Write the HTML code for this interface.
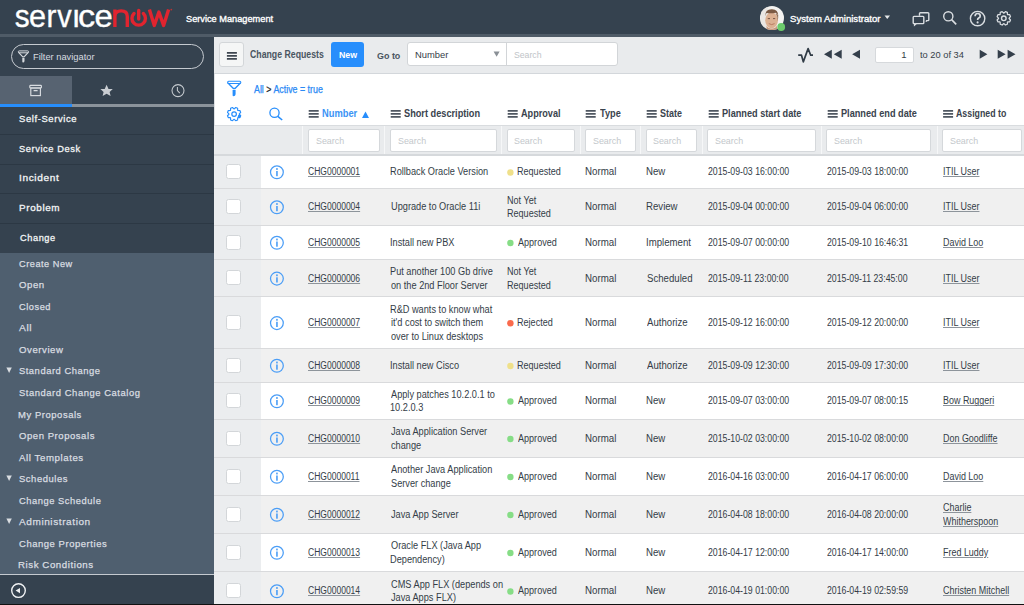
<!DOCTYPE html>
<html><head><meta charset="utf-8"><style>
html,body{margin:0;padding:0;}
body{width:1024px;height:605px;overflow:hidden;position:relative;background:#35424f;font-family:"Liberation Sans", sans-serif;}
.t{position:absolute;white-space:nowrap;}
.r{position:absolute;box-sizing:content-box;}
</style></head><body>
<div class="r" style="left:0px;top:0px;width:1024px;height:34px;background:#35424f;"></div>
<div class="r" style="left:0px;top:34px;width:1024px;height:3px;background:#4f5b67;"></div>
<div class="r" style="left:0px;top:37px;width:214px;height:568px;background:#35424f;"></div>
<svg class="r" style="left:0;top:0" width="180" height="34" viewBox="0 0 180 34"><g font-family="Liberation Sans" font-size="31.8" stroke-width="0.35"><text transform="translate(14.68,26.75) scale(0.936,1)" fill="#fff" stroke="#fff">s</text><text transform="translate(29.10,26.75) scale(0.964,1)" fill="#fff" stroke="#fff">e</text><text transform="translate(46.44,26.75) scale(0.937,1)" fill="#fff" stroke="#fff">r</text><text transform="translate(57.33,26.75) scale(0.908,1)" fill="#fff" stroke="#fff">v</text><text transform="translate(71.77,26.75) scale(0.996,1)" fill="#fff" stroke="#fff">ı</text><text transform="translate(77.93,26.75) scale(1.079,1)" fill="#fff" stroke="#fff">c</text><text transform="translate(94.60,26.75) scale(1.031,1)" fill="#fff" stroke="#fff">e</text></g><g fill="none" stroke="#e1242f" stroke-width="3.4"><path d="M114.9 27 V9.4 M114.9 16.2 Q115.2 10.9 121.1 10.9 Q127.3 10.9 127.3 16.5 V27"/><path d="M134 13.5 A6.75 6.75 0 1 0 143.4 13.5" stroke-linecap="round"/><path d="M138.7 10.4 V19" stroke-linecap="round"/><path d="M149.4 9.6 L154.3 25.4 L158.9 12 L163.6 25.4 L168.6 9.6" stroke-linejoin="round"/></g><circle cx="171.3" cy="9.6" r="0.9" fill="#b33"/></svg>
<div class="t" style="left:186.06px;top:13.03px;font-size:9.8px;line-height:12.74px;font-weight:normal;color:#fff;letter-spacing:0px;transform:scaleX(0.9407);transform-origin:0 0;-webkit-text-stroke:0.35px #fff">Service Management</div>
<svg class="r" style="left:758px;top:4px" width="30" height="30" viewBox="0 0 30 30">
<defs><clipPath id="av"><circle cx="14" cy="14" r="12"/></clipPath></defs>
<circle cx="14" cy="14" r="12" fill="#f4f2f0"/>
<g clip-path="url(#av)">
<path d="M3 8 Q4 2 10 3 L8 26 L2 26Z" fill="#e9e6e3"/>
<ellipse cx="13.6" cy="16.3" rx="6.4" ry="8" fill="#dcb193"/>
<path d="M7.2 12.5 Q7 5 13.8 5.2 Q20.2 5 20.4 12.2 Q19.5 9.2 17.5 8.8 Q13 9.8 8.5 9 Q7.6 10.5 7.2 12.5Z" fill="#7b5a44"/>
<path d="M17.6 9 Q20.6 10 20.2 14 L19.4 17 Q19.8 12 17.6 9Z" fill="#8e6b52"/>
<path d="M9.8 14.6 H12 M15 14.6 H17.2" stroke="#6a4c3c" stroke-width="0.9"/>
<path d="M10.8 19.6 Q13.6 21.6 16.6 19.6" stroke="#b5765e" stroke-width="0.9" fill="none"/>
<path d="M8.5 21.5 Q10 24.6 13.8 24.4 Q17.5 24.6 19 21.5 L19 26 L8.5 26Z" fill="#c9997c"/>
</g>
<circle cx="23.2" cy="23" r="3.9" fill="#6ccb6c"/>
</svg>
<div class="t" style="left:789.82px;top:12.83px;font-size:9.8px;line-height:12.74px;font-weight:normal;color:#fff;letter-spacing:0px;transform:scaleX(0.9778);transform-origin:0 0;-webkit-text-stroke:0.35px #fff">System Administrator</div>
<svg class="r" style="left:884px;top:15px" width="7" height="5"><path d="M0.5 0.5 H6 L3.25 4Z" fill="#e6e8ea"/></svg>
<svg class="r" style="left:905px;top:4px" width="116" height="30" viewBox="905 4 116 30" fill="none" stroke="#dadee2" stroke-width="1.4">
<path d="M919.5 15.7 V13.6 Q919.5 12.8 920.3 12.8 H928 Q928.8 12.8 928.8 13.6 V19.8 Q928.8 20.6 928 20.6 H926.6 L926 21.8"/>
<path d="M914 16.4 H923 Q923.8 16.4 923.8 17.2 V22.8 Q923.8 23.6 923 23.6 H916.2 L914.6 25 V23.6 H914 Q913.2 23.6 913.2 22.8 V17.2 Q913.2 16.4 914 16.4Z"/>
<circle cx="948.3" cy="16.3" r="4.6"/>
<path d="M951.6 19.6 L956.2 24.4" stroke-width="1.6"/>
<circle cx="977.6" cy="18.6" r="7.2"/>
<circle cx="1003.8" cy="18.3" r="2.3"/>
</svg>
<svg class="r" style="left:965px;top:6px" width="26" height="26" viewBox="965 6 26 26"><path d="M975.1 16.2 Q975.1 13.5 977.6 13.5 Q980.2 13.5 980.2 15.9 Q980.2 17.3 978.7 18.1 Q977.6 18.7 977.6 20.1" fill="none" stroke="#dadee2" stroke-width="1.7"/><circle cx="977.6" cy="22.4" r="1.05" fill="#dadee2"/></svg>
<svg class="r" style="left:0;top:0" width="1024" height="40"><path d="M1003.97 13.00 L1005.46 11.60 L1007.36 12.39 L1007.43 14.44 L1007.66 14.67 L1009.71 14.74 L1010.50 16.64 L1009.10 18.13 L1009.10 18.47 L1010.50 19.96 L1009.71 21.86 L1007.66 21.93 L1007.43 22.16 L1007.36 24.21 L1005.46 25.00 L1003.97 23.60 L1003.63 23.60 L1002.14 25.00 L1000.24 24.21 L1000.17 22.16 L999.94 21.93 L997.89 21.86 L997.10 19.96 L998.50 18.47 L998.50 18.13 L997.10 16.64 L997.89 14.74 L999.94 14.67 L1000.17 14.44 L1000.24 12.39 L1002.14 11.60 L1003.63 13.00Z" fill="none" stroke="#dadee2" stroke-width="1.25" stroke-linejoin="round"/></svg>
<div class="r" style="left:11px;top:44px;width:191px;height:23px;border:1px solid #c5cad0;border-radius:13px"></div>
<svg class="r" style="left:16px;top:49px" width="16" height="16" viewBox="16 49 16 16" fill="none" stroke="#d6dade" stroke-width="1.2">
<rect x="18.3" y="50.9" width="10.3" height="1.9" rx="0.9" stroke-width="1"/><path d="M18.6 52.4 L22.8 56.9 H24 L28.3 52.4" stroke-width="1.1"/><path d="M22.3 58 H24.5 V61 Q24.4 62.5 23 62.6 Q22.3 62.6 22.3 61.8Z" fill="#d6dade" stroke="none"/></svg>
<div class="t" style="left:32.70px;top:51.13px;font-size:9.4px;line-height:12.22px;font-weight:normal;color:#d8dce0;letter-spacing:0px;transform:scaleX(0.9919);transform-origin:0 0;">Filter navigator</div>
<div class="r" style="left:0px;top:76px;width:72px;height:28px;background:#576371;"></div>
<div class="r" style="left:0px;top:104px;width:72px;height:2.5px;background:#278efc;"></div>
<div class="r" style="left:72px;top:104px;width:142px;height:2.5px;background:#8b939b;"></div>
<svg class="r" style="left:0;top:76px" width="214" height="28" viewBox="0 76 214 28">
<g fill="none" stroke="#d9dde1" stroke-width="1.15">
<rect x="29.8" y="85.4" width="11.6" height="2.6" rx="0.8"/><rect x="30.8" y="88" width="9.6" height="7.6"/><path d="M33.6 90.6 H37.6" stroke-width="1.3"/>
</g>
<g fill="none" stroke="#c6cbd0" stroke-width="1.05"><circle cx="178" cy="90.6" r="6"/><path d="M177.4 87 V90.6 L179.8 93.2"/></g>
<path d="M106.6 84.8 L108.5 88.9 L112.8 89.1 L109.6 91.9 L110.6 96.1 L106.6 93.7 L102.6 96.1 L103.6 91.9 L100.4 89.1 L104.7 88.9Z" fill="#c9cdd2"/>
</svg>
<div class="t" style="left:18.61px;top:112.73px;font-size:9.6px;line-height:12.48px;font-weight:normal;color:#f2f4f5;letter-spacing:0.6px;transform:scaleX(0.9860);transform-origin:0 0;-webkit-text-stroke:0.3px #f2f4f5">Self-Service</div>
<div class="t" style="left:18.63px;top:142.53px;font-size:9.6px;line-height:12.48px;font-weight:normal;color:#f2f4f5;letter-spacing:0.6px;transform:scaleX(0.9677);transform-origin:0 0;-webkit-text-stroke:0.3px #f2f4f5">Service Desk</div>
<div class="t" style="left:18.55px;top:172.23px;font-size:9.6px;line-height:12.48px;font-weight:normal;color:#f2f4f5;letter-spacing:0.6px;transform:scaleX(1.0514);transform-origin:0 0;-webkit-text-stroke:0.3px #f2f4f5">Incident</div>
<div class="t" style="left:18.57px;top:202.33px;font-size:9.6px;line-height:12.48px;font-weight:normal;color:#f2f4f5;letter-spacing:0.6px;transform:scaleX(1.0316);transform-origin:0 0;-webkit-text-stroke:0.3px #f2f4f5">Problem</div>
<div class="t" style="left:19.60px;top:231.73px;font-size:9.6px;line-height:12.48px;font-weight:normal;color:#f2f4f5;letter-spacing:0.6px;transform:scaleX(0.9611);transform-origin:0 0;-webkit-text-stroke:0.3px #f2f4f5">Change</div>
<div class="r" style="left:0px;top:134px;width:214px;height:1px;background:#2c3844;"></div>
<div class="r" style="left:0px;top:163.7px;width:214px;height:1px;background:#2c3844;"></div>
<div class="r" style="left:0px;top:193.4px;width:214px;height:1px;background:#2c3844;"></div>
<div class="r" style="left:0px;top:223.1px;width:214px;height:1px;background:#2c3844;"></div>
<div class="r" style="left:0px;top:253px;width:214px;height:321px;background:#4f5f6f;"></div>
<div class="t" style="left:18.90px;top:257.63px;font-size:9.4px;line-height:12.22px;font-weight:normal;color:#d9dde1;letter-spacing:0.55px;transform:scaleX(0.9773);transform-origin:0 0;-webkit-text-stroke:0.25px #d9dde1">Create New</div>
<div class="t" style="left:18.90px;top:279.19px;font-size:9.4px;line-height:12.22px;font-weight:normal;color:#d9dde1;letter-spacing:0.55px;transform:scaleX(1.0208);transform-origin:0 0;-webkit-text-stroke:0.25px #d9dde1">Open</div>
<div class="t" style="left:18.90px;top:300.75px;font-size:9.4px;line-height:12.22px;font-weight:normal;color:#d9dde1;letter-spacing:0.55px;transform:scaleX(0.9844);transform-origin:0 0;-webkit-text-stroke:0.25px #d9dde1">Closed</div>
<div class="t" style="left:18.90px;top:322.31px;font-size:9.4px;line-height:12.22px;font-weight:normal;color:#d9dde1;letter-spacing:0.55px;transform:scaleX(1.0909);transform-origin:0 0;-webkit-text-stroke:0.25px #d9dde1">All</div>
<div class="t" style="left:18.90px;top:343.87px;font-size:9.4px;line-height:12.22px;font-weight:normal;color:#d9dde1;letter-spacing:0.55px;transform:scaleX(1.0233);transform-origin:0 0;-webkit-text-stroke:0.25px #d9dde1">Overview</div>
<div class="t" style="left:18.90px;top:365.43px;font-size:9.4px;line-height:12.22px;font-weight:normal;color:#d9dde1;letter-spacing:0.55px;-webkit-text-stroke:0.25px #d9dde1">Standard Change</div>
<svg class="r" style="left:6px;top:367.2px" width="7" height="7"><path d="M0.4 0.6 H5.8 L3.1 5.9Z" fill="#d9dde1"/></svg>
<div class="t" style="left:18.90px;top:386.99px;font-size:9.4px;line-height:12.22px;font-weight:normal;color:#d9dde1;letter-spacing:0.55px;transform:scaleX(1.0033);transform-origin:0 0;-webkit-text-stroke:0.25px #d9dde1">Standard Change Catalog</div>
<div class="t" style="left:17.89px;top:408.55px;font-size:9.4px;line-height:12.22px;font-weight:normal;color:#d9dde1;letter-spacing:0.55px;transform:scaleX(1.0081);transform-origin:0 0;-webkit-text-stroke:0.25px #d9dde1">My Proposals</div>
<div class="t" style="left:18.90px;top:430.11px;font-size:9.4px;line-height:12.22px;font-weight:normal;color:#d9dde1;letter-spacing:0.55px;transform:scaleX(1.0135);transform-origin:0 0;-webkit-text-stroke:0.25px #d9dde1">Open Proposals</div>
<div class="t" style="left:18.90px;top:451.67px;font-size:9.4px;line-height:12.22px;font-weight:normal;color:#d9dde1;letter-spacing:0.55px;transform:scaleX(1.0323);transform-origin:0 0;-webkit-text-stroke:0.25px #d9dde1">All Templates</div>
<div class="t" style="left:18.90px;top:473.23px;font-size:9.4px;line-height:12.22px;font-weight:normal;color:#d9dde1;letter-spacing:0.55px;transform:scaleX(1.0062);transform-origin:0 0;-webkit-text-stroke:0.25px #d9dde1">Schedules</div>
<svg class="r" style="left:6px;top:475.0px" width="7" height="7"><path d="M0.4 0.6 H5.8 L3.1 5.9Z" fill="#d9dde1"/></svg>
<div class="t" style="left:18.90px;top:494.79px;font-size:9.4px;line-height:12.22px;font-weight:normal;color:#d9dde1;letter-spacing:0.55px;transform:scaleX(0.9951);transform-origin:0 0;-webkit-text-stroke:0.25px #d9dde1">Change Schedule</div>
<div class="t" style="left:18.90px;top:516.35px;font-size:9.4px;line-height:12.22px;font-weight:normal;color:#d9dde1;letter-spacing:0.55px;transform:scaleX(1.0697);transform-origin:0 0;-webkit-text-stroke:0.25px #d9dde1">Administration</div>
<svg class="r" style="left:6px;top:518.1px" width="7" height="7"><path d="M0.4 0.6 H5.8 L3.1 5.9Z" fill="#d9dde1"/></svg>
<div class="t" style="left:18.90px;top:537.91px;font-size:9.4px;line-height:12.22px;font-weight:normal;color:#d9dde1;letter-spacing:0.55px;transform:scaleX(1.0080);transform-origin:0 0;-webkit-text-stroke:0.25px #d9dde1">Change Properties</div>
<div class="t" style="left:17.87px;top:559.47px;font-size:9.4px;line-height:12.22px;font-weight:normal;color:#d9dde1;letter-spacing:0.55px;transform:scaleX(1.0319);transform-origin:0 0;-webkit-text-stroke:0.25px #d9dde1">Risk Conditions</div>
<div class="r" style="left:0px;top:573.5px;width:214px;height:1.5px;background:#c5cad0;"></div>
<svg class="r" style="left:8px;top:580px" width="22" height="22" viewBox="8 580 22 22">
<circle cx="18.5" cy="590.6" r="6.8" fill="none" stroke="#f0f2f4" stroke-width="1.4"/>
<path d="M15.6 590.6 L20 588 V593.2Z" fill="#f0f2f4"/></svg>
<div class="r" style="left:214px;top:37px;width:810px;height:568px;background:#fff;"></div>
<div class="r" style="left:214px;top:37px;width:1px;height:568px;background:#dfe2e5;"></div>
<div class="r" style="left:214px;top:37px;width:810px;height:36px;background:#e9ebed;"></div>
<div class="r" style="left:214px;top:72.5px;width:810px;height:1px;background:#d3d7db;"></div>
<div class="r" style="left:219px;top:41.8px;width:23px;height:23.5px;background:#f5f6f6;border:1px solid #d3d6d9;border-radius:3px"></div>
<svg class="r" style="left:226px;top:51px" width="12" height="10" viewBox="226 51 12 10"><path d="M226.9 52.9 H236.9 M226.9 55.9 H236.9 M226.9 58.9 H236.9" stroke="#3f4750" stroke-width="1.7"/></svg>
<div class="t" style="left:250.00px;top:48.03px;font-size:10px;line-height:13.0px;font-weight:bold;color:#4a5561;letter-spacing:0px;transform:scaleX(0.8741);transform-origin:0 0;">Change Requests</div>
<div class="r" style="left:331px;top:42px;width:33px;height:25px;background:#278efc;border-radius:3px"></div>
<div class="t" style="left:338.80px;top:49.23px;font-size:9.8px;line-height:12.74px;font-weight:bold;color:#fff;letter-spacing:0px;transform:scaleX(0.9000);transform-origin:0 0;">New</div>
<div class="t" style="left:377.00px;top:50.03px;font-size:9.8px;line-height:12.74px;font-weight:bold;color:#4a5561;letter-spacing:0px;transform:scaleX(0.9120);transform-origin:0 0;">Go to</div>
<div class="r" style="left:406.8px;top:42.3px;width:209.5px;height:22px;background:#fff;border:1px solid #d2d5d8;border-radius:3px"></div>
<div class="r" style="left:506.2px;top:43px;width:1px;height:22px;background:#d2d5d8;"></div>
<div class="t" style="left:414.50px;top:48.53px;font-size:9.5px;line-height:12.35px;font-weight:normal;color:#343d47;letter-spacing:0px;transform:scaleX(0.9853);transform-origin:0 0;">Number</div>
<svg class="r" style="left:493px;top:51px" width="8" height="7"><path d="M0.6 0.6 H6.6 L3.6 5.8Z" fill="#8a9096"/></svg>
<div class="t" style="left:513.70px;top:48.53px;font-size:9.5px;line-height:12.35px;font-weight:normal;color:#c0c4c8;letter-spacing:0px;transform:scaleX(0.9133);transform-origin:0 0;">Search</div>
<svg class="r" style="left:795px;top:45px" width="70" height="20" viewBox="795 45 70 20"><path d="M798.2 55.2 H801.5 L803.3 61.9 L808.1 48.6 L810.7 55.2 H813" fill="none" stroke="#303b46" stroke-width="1.7" stroke-linejoin="round"/><path d="M824 54.3 L831.8 49.8 V58.8Z M833.8 54.3 L841.7 49.8 V58.8Z M852.1 54.3 L860 49.8 V58.8Z" fill="#343f4b"/></svg>
<div class="r" style="left:875.4px;top:47.4px;width:37px;height:13.8px;background:#fff;border:1px solid #d6d9dc;border-radius:2px"></div>
<div class="t" style="left:901.30px;top:48.53px;font-size:9.5px;line-height:12.35px;font-weight:normal;color:#343d47;letter-spacing:0px;">1</div>
<div class="t" style="left:920.00px;top:48.53px;font-size:9.5px;line-height:12.35px;font-weight:normal;color:#353e48;letter-spacing:0px;transform:scaleX(0.9778);transform-origin:0 0;">to 20 of 34</div>
<svg class="r" style="left:975px;top:45px" width="49" height="20" viewBox="975 45 49 20"><path d="M987.4 54.3 L979.7 49.8 V58.8Z M1005.6 54.3 L997.7 49.8 V58.8Z M1015.5 54.3 L1007.6 49.8 V58.8Z" fill="#343f4b"/></svg>
<svg class="r" style="left:224px;top:78px" width="70" height="46" viewBox="224 78 70 46">
<g fill="none" stroke="#278efc" stroke-width="1.3">
<rect x="227.6" y="81.3" width="13.2" height="2.2" rx="1" stroke-width="1.05"/>
<path d="M228 83 L233.4 88.5 H235 L240.4 83"/>
<path d="M232.6 90 H235.6 V94.2 Q235.4 96 233.4 96.2 Q232.6 96.2 232.6 95.2Z" fill="#278efc" stroke="none"/>
<circle cx="274.5" cy="112.8" r="4.6"/><path d="M277.8 116.3 L282.2 120" stroke-width="1.6"/>
</g>
<path d="M234.26 108.90 L235.74 107.50 L237.61 108.27 L237.66 110.31 L237.89 110.54 L239.93 110.59 L240.70 112.46 L239.30 113.94 L239.30 114.26 L240.70 115.74 L239.93 117.61 L237.89 117.66 L237.66 117.89 L237.61 119.93 L235.74 120.70 L234.26 119.30 L233.94 119.30 L232.46 120.70 L230.59 119.93 L230.54 117.89 L230.31 117.66 L228.27 117.61 L227.50 115.74 L228.90 114.26 L228.90 113.94 L227.50 112.46 L228.27 110.59 L230.31 110.54 L230.54 110.31 L230.59 108.27 L232.46 107.50 L233.94 108.90Z" fill="none" stroke="#278efc" stroke-width="1.15" stroke-linejoin="round"/>
<circle cx="234.1" cy="114.1" r="2.3" fill="none" stroke="#278efc" stroke-width="1.2"/>
<circle cx="239.3" cy="116.2" r="1.4" fill="#278efc"/>
</svg>
<div class="t" style="left:254.30px;top:83.23px;font-size:10px;line-height:13.0px;font-weight:normal;color:#2b8af5;letter-spacing:0px;transform:scaleX(0.8846);transform-origin:0 0;-webkit-text-stroke:0.25px #2b8af5">All <span style="color:#222;-webkit-text-stroke:0.2px #222">&gt;</span> Active = true</div>
<div class="r" style="left:214px;top:125px;width:810px;height:1px;background:#d9dcdf;"></div>
<div class="r" style="left:214px;top:126px;width:810px;height:29px;background:#e9ebed;"></div>
<div class="r" style="left:214px;top:154px;width:810px;height:1.5px;background:#d6d9dc;"></div>
<div class="r" style="left:301.9px;top:126px;width:1px;height:28px;background:#f6f7f8;"></div>
<div class="r" style="left:308.2px;top:129.2px;width:69.5px;height:21.2px;background:#fff;border:1px solid #d5d8db;border-radius:2px"></div>
<div class="t" style="left:316.00px;top:135.43px;font-size:9.6px;line-height:12.48px;font-weight:normal;color:#c3c7cb;letter-spacing:0px;transform:scaleX(0.9267);transform-origin:0 0;">Search</div>
<div class="t" style="left:322.30px;top:107.34px;font-size:10.1px;line-height:13.13px;font-weight:bold;color:#3b93f5;letter-spacing:0px;transform:scaleX(0.9237);transform-origin:0 0;">Number</div>
<div class="r" style="left:384.1px;top:126px;width:1px;height:28px;background:#f6f7f8;"></div>
<div class="r" style="left:390.3px;top:129.2px;width:104.3px;height:21.2px;background:#fff;border:1px solid #d5d8db;border-radius:2px"></div>
<div class="t" style="left:398.10px;top:135.43px;font-size:9.6px;line-height:12.48px;font-weight:normal;color:#c3c7cb;letter-spacing:0px;transform:scaleX(0.9267);transform-origin:0 0;">Search</div>
<div class="t" style="left:404.40px;top:107.34px;font-size:10.1px;line-height:13.13px;font-weight:bold;color:#3a434d;letter-spacing:0px;transform:scaleX(0.9108);transform-origin:0 0;">Short description</div>
<div class="r" style="left:501.4px;top:126px;width:1px;height:28px;background:#f6f7f8;"></div>
<div class="r" style="left:506.6px;top:129.2px;width:66.1px;height:21.2px;background:#fff;border:1px solid #d5d8db;border-radius:2px"></div>
<div class="t" style="left:514.40px;top:135.43px;font-size:9.6px;line-height:12.48px;font-weight:normal;color:#c3c7cb;letter-spacing:0px;transform:scaleX(0.9267);transform-origin:0 0;">Search</div>
<div class="t" style="left:520.60px;top:107.34px;font-size:10.1px;line-height:13.13px;font-weight:bold;color:#3a434d;letter-spacing:0px;transform:scaleX(0.9023);transform-origin:0 0;">Approval</div>
<div class="r" style="left:579.5px;top:126px;width:1px;height:28px;background:#f6f7f8;"></div>
<div class="r" style="left:585.3px;top:129.2px;width:48.3px;height:21.2px;background:#fff;border:1px solid #d5d8db;border-radius:2px"></div>
<div class="t" style="left:593.10px;top:135.43px;font-size:9.6px;line-height:12.48px;font-weight:normal;color:#c3c7cb;letter-spacing:0px;transform:scaleX(0.9267);transform-origin:0 0;">Search</div>
<div class="t" style="left:599.70px;top:107.34px;font-size:10.1px;line-height:13.13px;font-weight:bold;color:#3a434d;letter-spacing:0px;transform:scaleX(0.9087);transform-origin:0 0;">Type</div>
<div class="r" style="left:639.8px;top:126px;width:1px;height:28px;background:#f6f7f8;"></div>
<div class="r" style="left:645.6px;top:129.2px;width:49.4px;height:21.2px;background:#fff;border:1px solid #d5d8db;border-radius:2px"></div>
<div class="t" style="left:653.40px;top:135.43px;font-size:9.6px;line-height:12.48px;font-weight:normal;color:#c3c7cb;letter-spacing:0px;transform:scaleX(0.9267);transform-origin:0 0;">Search</div>
<div class="t" style="left:660.30px;top:107.34px;font-size:10.1px;line-height:13.13px;font-weight:bold;color:#3a434d;letter-spacing:0px;transform:scaleX(0.8880);transform-origin:0 0;">State</div>
<div class="r" style="left:701.5px;top:126px;width:1px;height:28px;background:#f6f7f8;"></div>
<div class="r" style="left:707px;top:129.2px;width:107.2px;height:21.2px;background:#fff;border:1px solid #d5d8db;border-radius:2px"></div>
<div class="t" style="left:714.80px;top:135.43px;font-size:9.6px;line-height:12.48px;font-weight:normal;color:#c3c7cb;letter-spacing:0px;transform:scaleX(0.9267);transform-origin:0 0;">Search</div>
<div class="t" style="left:722.00px;top:107.34px;font-size:10.1px;line-height:13.13px;font-weight:bold;color:#3a434d;letter-spacing:0px;transform:scaleX(0.9080);transform-origin:0 0;">Planned start date</div>
<div class="r" style="left:820.5px;top:126px;width:1px;height:28px;background:#f6f7f8;"></div>
<div class="r" style="left:826.3px;top:129.2px;width:103.1px;height:21.2px;background:#fff;border:1px solid #d5d8db;border-radius:2px"></div>
<div class="t" style="left:834.10px;top:135.43px;font-size:9.6px;line-height:12.48px;font-weight:normal;color:#c3c7cb;letter-spacing:0px;transform:scaleX(0.9267);transform-origin:0 0;">Search</div>
<div class="t" style="left:841.00px;top:107.34px;font-size:10.1px;line-height:13.13px;font-weight:bold;color:#3a434d;letter-spacing:0px;transform:scaleX(0.9083);transform-origin:0 0;">Planned end date</div>
<div class="r" style="left:936.5px;top:126px;width:1px;height:28px;background:#f6f7f8;"></div>
<div class="r" style="left:942px;top:129.2px;width:78.0px;height:21.2px;background:#fff;border:1px solid #d5d8db;border-radius:2px"></div>
<div class="t" style="left:949.80px;top:135.43px;font-size:9.6px;line-height:12.48px;font-weight:normal;color:#c3c7cb;letter-spacing:0px;transform:scaleX(0.9267);transform-origin:0 0;">Search</div>
<div class="t" style="left:955.80px;top:107.34px;font-size:10.1px;line-height:13.13px;font-weight:bold;color:#3a434d;letter-spacing:0px;transform:scaleX(0.8724);transform-origin:0 0;">Assigned to</div>
<svg class="r" style="left:0;top:100px" width="1024" height="25" viewBox="0 100 1024 25"><path d="M308.7 110.9 H318.7 M308.7 113.9 H318.7 M308.7 116.9 H318.7 M390.7 110.9 H400.7 M390.7 113.9 H400.7 M390.7 116.9 H400.7 M507.7 110.9 H517.7 M507.7 113.9 H517.7 M507.7 116.9 H517.7 M585.7 110.9 H595.7 M585.7 113.9 H595.7 M585.7 116.9 H595.7 M646.7 110.9 H656.7 M646.7 113.9 H656.7 M646.7 116.9 H656.7 M708.7 110.9 H718.7 M708.7 113.9 H718.7 M708.7 116.9 H718.7 M827.7 110.9 H837.7 M827.7 113.9 H837.7 M827.7 116.9 H837.7 M943.1 110.9 H953.1 M943.1 113.9 H953.1 M943.1 116.9 H953.1" stroke="#4f5761" stroke-width="1.75"/><path d="M362 118 L365.5 111.5 L369 118Z" fill="#278efc"/></svg>
<div class="r" style="left:214px;top:155.5px;width:810px;height:33px;background:#fff;"></div>
<div class="r" style="left:214px;top:155.5px;width:47px;height:33px;background:#ebedef;"></div>
<div class="r" style="left:214px;top:187.5px;width:810px;height:1px;background:#d9dadc;"></div>
<div class="r" style="left:225.6px;top:164.0px;width:13px;height:13px;background:#fff;border:1px solid #d3d6d9;border-radius:2.5px"></div>
<div class="t" style="left:308.20px;top:165.44px;font-size:10px;line-height:13.0px;font-weight:normal;color:#343d47;letter-spacing:0px;transform:scaleX(0.8520);transform-origin:0 0;text-decoration:underline;text-underline-offset:1.2px;text-decoration-color:#8d949b;">CHG0000001</div>
<div class="t" style="left:389.88px;top:165.44px;font-size:10px;line-height:13.0px;font-weight:normal;color:#343d47;letter-spacing:0px;transform:scaleX(0.9200);transform-origin:0 0;">Rollback Oracle Version</div>
<div class="t" style="left:517.29px;top:165.44px;font-size:10px;line-height:13.0px;font-weight:normal;color:#343d47;letter-spacing:0px;transform:scaleX(0.9060);transform-origin:0 0;">Requested</div>
<div class="t" style="left:584.93px;top:165.44px;font-size:10px;line-height:13.0px;font-weight:normal;color:#343d47;letter-spacing:0px;transform:scaleX(0.9740);transform-origin:0 0;">Normal</div>
<div class="t" style="left:645.74px;top:165.44px;font-size:10px;line-height:13.0px;font-weight:normal;color:#343d47;letter-spacing:0px;transform:scaleX(0.9630);transform-origin:0 0;">New</div>
<div class="t" style="left:707.90px;top:165.44px;font-size:10px;line-height:13.0px;font-weight:normal;color:#343d47;letter-spacing:0px;transform:scaleX(0.8740);transform-origin:0 0;">2015-09-03 16:00:00</div>
<div class="t" style="left:827.20px;top:165.44px;font-size:10px;line-height:13.0px;font-weight:normal;color:#343d47;letter-spacing:0px;transform:scaleX(0.8740);transform-origin:0 0;">2015-09-03 18:00:00</div>
<div class="t" style="left:942.70px;top:165.44px;font-size:10px;line-height:13.0px;font-weight:normal;color:#343d47;letter-spacing:0px;transform:scaleX(0.8950);transform-origin:0 0;text-decoration:underline;text-underline-offset:1.2px;text-decoration-color:#8d949b;">ITIL User</div>
<div class="r" style="left:214px;top:188.5px;width:810px;height:37px;background:#f0f0f0;"></div>
<div class="r" style="left:214px;top:188.5px;width:47px;height:37px;background:#ebedef;"></div>
<div class="r" style="left:214px;top:224.5px;width:810px;height:1px;background:#d9dadc;"></div>
<div class="r" style="left:225.6px;top:199.0px;width:13px;height:13px;background:#fff;border:1px solid #d3d6d9;border-radius:2.5px"></div>
<div class="t" style="left:308.20px;top:200.44px;font-size:10px;line-height:13.0px;font-weight:normal;color:#343d47;letter-spacing:0px;transform:scaleX(0.8520);transform-origin:0 0;text-decoration:underline;text-underline-offset:1.2px;text-decoration-color:#8d949b;">CHG0000004</div>
<div class="t" style="left:390.80px;top:200.44px;font-size:10px;line-height:13.0px;font-weight:normal;color:#343d47;letter-spacing:0px;transform:scaleX(0.9200);transform-origin:0 0;">Upgrade to Oracle 11i</div>
<div class="t" style="left:506.59px;top:193.59px;font-size:10px;line-height:13.0px;font-weight:normal;color:#343d47;letter-spacing:0px;transform:scaleX(0.9060);transform-origin:0 0;">Not Yet</div>
<div class="t" style="left:506.59px;top:207.28px;font-size:10px;line-height:13.0px;font-weight:normal;color:#343d47;letter-spacing:0px;transform:scaleX(0.9060);transform-origin:0 0;">Requested</div>
<div class="t" style="left:584.93px;top:200.44px;font-size:10px;line-height:13.0px;font-weight:normal;color:#343d47;letter-spacing:0px;transform:scaleX(0.9740);transform-origin:0 0;">Normal</div>
<div class="t" style="left:645.74px;top:200.44px;font-size:10px;line-height:13.0px;font-weight:normal;color:#343d47;letter-spacing:0px;transform:scaleX(0.9630);transform-origin:0 0;">Review</div>
<div class="t" style="left:707.90px;top:200.44px;font-size:10px;line-height:13.0px;font-weight:normal;color:#343d47;letter-spacing:0px;transform:scaleX(0.8740);transform-origin:0 0;">2015-09-04 00:00:00</div>
<div class="t" style="left:827.20px;top:200.44px;font-size:10px;line-height:13.0px;font-weight:normal;color:#343d47;letter-spacing:0px;transform:scaleX(0.8740);transform-origin:0 0;">2015-09-04 06:00:00</div>
<div class="t" style="left:942.70px;top:200.44px;font-size:10px;line-height:13.0px;font-weight:normal;color:#343d47;letter-spacing:0px;transform:scaleX(0.8950);transform-origin:0 0;text-decoration:underline;text-underline-offset:1.2px;text-decoration-color:#8d949b;">ITIL User</div>
<div class="r" style="left:214px;top:225.5px;width:810px;height:34px;background:#fff;"></div>
<div class="r" style="left:214px;top:225.5px;width:47px;height:34px;background:#ebedef;"></div>
<div class="r" style="left:214px;top:258.5px;width:810px;height:1px;background:#d9dadc;"></div>
<div class="r" style="left:225.6px;top:234.5px;width:13px;height:13px;background:#fff;border:1px solid #d3d6d9;border-radius:2.5px"></div>
<div class="t" style="left:308.20px;top:235.94px;font-size:10px;line-height:13.0px;font-weight:normal;color:#343d47;letter-spacing:0px;transform:scaleX(0.8520);transform-origin:0 0;text-decoration:underline;text-underline-offset:1.2px;text-decoration-color:#8d949b;">CHG0000005</div>
<div class="t" style="left:389.88px;top:235.94px;font-size:10px;line-height:13.0px;font-weight:normal;color:#343d47;letter-spacing:0px;transform:scaleX(0.9200);transform-origin:0 0;">Install new PBX</div>
<div class="t" style="left:518.20px;top:235.94px;font-size:10px;line-height:13.0px;font-weight:normal;color:#343d47;letter-spacing:0px;transform:scaleX(0.9060);transform-origin:0 0;">Approved</div>
<div class="t" style="left:584.93px;top:235.94px;font-size:10px;line-height:13.0px;font-weight:normal;color:#343d47;letter-spacing:0px;transform:scaleX(0.9740);transform-origin:0 0;">Normal</div>
<div class="t" style="left:645.74px;top:235.94px;font-size:10px;line-height:13.0px;font-weight:normal;color:#343d47;letter-spacing:0px;transform:scaleX(0.9630);transform-origin:0 0;">Implement</div>
<div class="t" style="left:707.90px;top:235.94px;font-size:10px;line-height:13.0px;font-weight:normal;color:#343d47;letter-spacing:0px;transform:scaleX(0.8740);transform-origin:0 0;">2015-09-07 00:00:00</div>
<div class="t" style="left:827.20px;top:235.94px;font-size:10px;line-height:13.0px;font-weight:normal;color:#343d47;letter-spacing:0px;transform:scaleX(0.8740);transform-origin:0 0;">2015-09-10 16:46:31</div>
<div class="t" style="left:942.70px;top:235.94px;font-size:10px;line-height:13.0px;font-weight:normal;color:#343d47;letter-spacing:0px;transform:scaleX(0.8950);transform-origin:0 0;text-decoration:underline;text-underline-offset:1.2px;text-decoration-color:#8d949b;">David Loo</div>
<div class="r" style="left:214px;top:259.5px;width:810px;height:37.60000000000002px;background:#f0f0f0;"></div>
<div class="r" style="left:214px;top:259.5px;width:47px;height:37.60000000000002px;background:#ebedef;"></div>
<div class="r" style="left:214px;top:296.1px;width:810px;height:1px;background:#d9dadc;"></div>
<div class="r" style="left:225.6px;top:270.3px;width:13px;height:13px;background:#fff;border:1px solid #d3d6d9;border-radius:2.5px"></div>
<div class="t" style="left:308.20px;top:271.74px;font-size:10px;line-height:13.0px;font-weight:normal;color:#343d47;letter-spacing:0px;transform:scaleX(0.8520);transform-origin:0 0;text-decoration:underline;text-underline-offset:1.2px;text-decoration-color:#8d949b;">CHG0000006</div>
<div class="t" style="left:389.88px;top:264.89px;font-size:10px;line-height:13.0px;font-weight:normal;color:#343d47;letter-spacing:0px;transform:scaleX(0.9200);transform-origin:0 0;">Put another 100 Gb drive</div>
<div class="t" style="left:390.80px;top:278.59px;font-size:10px;line-height:13.0px;font-weight:normal;color:#343d47;letter-spacing:0px;transform:scaleX(0.9200);transform-origin:0 0;">on the 2nd Floor Server</div>
<div class="t" style="left:506.59px;top:264.89px;font-size:10px;line-height:13.0px;font-weight:normal;color:#343d47;letter-spacing:0px;transform:scaleX(0.9060);transform-origin:0 0;">Not Yet</div>
<div class="t" style="left:506.59px;top:278.59px;font-size:10px;line-height:13.0px;font-weight:normal;color:#343d47;letter-spacing:0px;transform:scaleX(0.9060);transform-origin:0 0;">Requested</div>
<div class="t" style="left:584.93px;top:271.74px;font-size:10px;line-height:13.0px;font-weight:normal;color:#343d47;letter-spacing:0px;transform:scaleX(0.9740);transform-origin:0 0;">Normal</div>
<div class="t" style="left:646.70px;top:271.74px;font-size:10px;line-height:13.0px;font-weight:normal;color:#343d47;letter-spacing:0px;transform:scaleX(0.9630);transform-origin:0 0;">Scheduled</div>
<div class="t" style="left:707.90px;top:271.74px;font-size:10px;line-height:13.0px;font-weight:normal;color:#343d47;letter-spacing:0px;transform:scaleX(0.8740);transform-origin:0 0;">2015-09-11 23:00:00</div>
<div class="t" style="left:827.20px;top:271.74px;font-size:10px;line-height:13.0px;font-weight:normal;color:#343d47;letter-spacing:0px;transform:scaleX(0.8740);transform-origin:0 0;">2015-09-11 23:45:00</div>
<div class="t" style="left:942.70px;top:271.74px;font-size:10px;line-height:13.0px;font-weight:normal;color:#343d47;letter-spacing:0px;transform:scaleX(0.8950);transform-origin:0 0;text-decoration:underline;text-underline-offset:1.2px;text-decoration-color:#8d949b;">ITIL User</div>
<div class="r" style="left:214px;top:297.1px;width:810px;height:51.39999999999998px;background:#fff;"></div>
<div class="r" style="left:214px;top:297.1px;width:47px;height:51.39999999999998px;background:#ebedef;"></div>
<div class="r" style="left:214px;top:347.5px;width:810px;height:1px;background:#d9dadc;"></div>
<div class="r" style="left:225.6px;top:314.8px;width:13px;height:13px;background:#fff;border:1px solid #d3d6d9;border-radius:2.5px"></div>
<div class="t" style="left:308.20px;top:316.24px;font-size:10px;line-height:13.0px;font-weight:normal;color:#343d47;letter-spacing:0px;transform:scaleX(0.8520);transform-origin:0 0;text-decoration:underline;text-underline-offset:1.2px;text-decoration-color:#8d949b;">CHG0000007</div>
<div class="t" style="left:389.88px;top:302.54px;font-size:10px;line-height:13.0px;font-weight:normal;color:#343d47;letter-spacing:0px;transform:scaleX(0.9200);transform-origin:0 0;">R&amp;D wants to know what</div>
<div class="t" style="left:390.80px;top:316.24px;font-size:10px;line-height:13.0px;font-weight:normal;color:#343d47;letter-spacing:0px;transform:scaleX(0.9200);transform-origin:0 0;">it'd cost to switch them</div>
<div class="t" style="left:390.80px;top:329.94px;font-size:10px;line-height:13.0px;font-weight:normal;color:#343d47;letter-spacing:0px;transform:scaleX(0.9200);transform-origin:0 0;">over to Linux desktops</div>
<div class="t" style="left:517.29px;top:316.24px;font-size:10px;line-height:13.0px;font-weight:normal;color:#343d47;letter-spacing:0px;transform:scaleX(0.9060);transform-origin:0 0;">Rejected</div>
<div class="t" style="left:584.93px;top:316.24px;font-size:10px;line-height:13.0px;font-weight:normal;color:#343d47;letter-spacing:0px;transform:scaleX(0.9740);transform-origin:0 0;">Normal</div>
<div class="t" style="left:646.70px;top:316.24px;font-size:10px;line-height:13.0px;font-weight:normal;color:#343d47;letter-spacing:0px;transform:scaleX(0.9630);transform-origin:0 0;">Authorize</div>
<div class="t" style="left:707.90px;top:316.24px;font-size:10px;line-height:13.0px;font-weight:normal;color:#343d47;letter-spacing:0px;transform:scaleX(0.8740);transform-origin:0 0;">2015-09-12 16:00:00</div>
<div class="t" style="left:827.20px;top:316.24px;font-size:10px;line-height:13.0px;font-weight:normal;color:#343d47;letter-spacing:0px;transform:scaleX(0.8740);transform-origin:0 0;">2015-09-12 20:00:00</div>
<div class="t" style="left:942.70px;top:316.24px;font-size:10px;line-height:13.0px;font-weight:normal;color:#343d47;letter-spacing:0px;transform:scaleX(0.8950);transform-origin:0 0;text-decoration:underline;text-underline-offset:1.2px;text-decoration-color:#8d949b;">ITIL User</div>
<div class="r" style="left:214px;top:348.5px;width:810px;height:34px;background:#f0f0f0;"></div>
<div class="r" style="left:214px;top:348.5px;width:47px;height:34px;background:#ebedef;"></div>
<div class="r" style="left:214px;top:381.5px;width:810px;height:1px;background:#d9dadc;"></div>
<div class="r" style="left:225.6px;top:357.5px;width:13px;height:13px;background:#fff;border:1px solid #d3d6d9;border-radius:2.5px"></div>
<div class="t" style="left:308.20px;top:358.94px;font-size:10px;line-height:13.0px;font-weight:normal;color:#343d47;letter-spacing:0px;transform:scaleX(0.8520);transform-origin:0 0;text-decoration:underline;text-underline-offset:1.2px;text-decoration-color:#8d949b;">CHG0000008</div>
<div class="t" style="left:389.88px;top:358.94px;font-size:10px;line-height:13.0px;font-weight:normal;color:#343d47;letter-spacing:0px;transform:scaleX(0.9200);transform-origin:0 0;">Install new Cisco</div>
<div class="t" style="left:517.29px;top:358.94px;font-size:10px;line-height:13.0px;font-weight:normal;color:#343d47;letter-spacing:0px;transform:scaleX(0.9060);transform-origin:0 0;">Requested</div>
<div class="t" style="left:584.93px;top:358.94px;font-size:10px;line-height:13.0px;font-weight:normal;color:#343d47;letter-spacing:0px;transform:scaleX(0.9740);transform-origin:0 0;">Normal</div>
<div class="t" style="left:646.70px;top:358.94px;font-size:10px;line-height:13.0px;font-weight:normal;color:#343d47;letter-spacing:0px;transform:scaleX(0.9630);transform-origin:0 0;">Authorize</div>
<div class="t" style="left:707.90px;top:358.94px;font-size:10px;line-height:13.0px;font-weight:normal;color:#343d47;letter-spacing:0px;transform:scaleX(0.8740);transform-origin:0 0;">2015-09-09 12:30:00</div>
<div class="t" style="left:827.20px;top:358.94px;font-size:10px;line-height:13.0px;font-weight:normal;color:#343d47;letter-spacing:0px;transform:scaleX(0.8740);transform-origin:0 0;">2015-09-09 17:30:00</div>
<div class="t" style="left:942.70px;top:358.94px;font-size:10px;line-height:13.0px;font-weight:normal;color:#343d47;letter-spacing:0px;transform:scaleX(0.8950);transform-origin:0 0;text-decoration:underline;text-underline-offset:1.2px;text-decoration-color:#8d949b;">ITIL User</div>
<div class="r" style="left:214px;top:382.5px;width:810px;height:37px;background:#fff;"></div>
<div class="r" style="left:214px;top:382.5px;width:47px;height:37px;background:#ebedef;"></div>
<div class="r" style="left:214px;top:418.5px;width:810px;height:1px;background:#d9dadc;"></div>
<div class="r" style="left:225.6px;top:393.0px;width:13px;height:13px;background:#fff;border:1px solid #d3d6d9;border-radius:2.5px"></div>
<div class="t" style="left:308.20px;top:394.44px;font-size:10px;line-height:13.0px;font-weight:normal;color:#343d47;letter-spacing:0px;transform:scaleX(0.8520);transform-origin:0 0;text-decoration:underline;text-underline-offset:1.2px;text-decoration-color:#8d949b;">CHG0000009</div>
<div class="t" style="left:390.80px;top:387.59px;font-size:10px;line-height:13.0px;font-weight:normal;color:#343d47;letter-spacing:0px;transform:scaleX(0.9200);transform-origin:0 0;">Apply patches 10.2.0.1 to</div>
<div class="t" style="left:389.88px;top:401.29px;font-size:10px;line-height:13.0px;font-weight:normal;color:#343d47;letter-spacing:0px;transform:scaleX(0.9200);transform-origin:0 0;">10.2.0.3</div>
<div class="t" style="left:518.20px;top:394.44px;font-size:10px;line-height:13.0px;font-weight:normal;color:#343d47;letter-spacing:0px;transform:scaleX(0.9060);transform-origin:0 0;">Approved</div>
<div class="t" style="left:584.93px;top:394.44px;font-size:10px;line-height:13.0px;font-weight:normal;color:#343d47;letter-spacing:0px;transform:scaleX(0.9740);transform-origin:0 0;">Normal</div>
<div class="t" style="left:645.74px;top:394.44px;font-size:10px;line-height:13.0px;font-weight:normal;color:#343d47;letter-spacing:0px;transform:scaleX(0.9630);transform-origin:0 0;">New</div>
<div class="t" style="left:707.90px;top:394.44px;font-size:10px;line-height:13.0px;font-weight:normal;color:#343d47;letter-spacing:0px;transform:scaleX(0.8740);transform-origin:0 0;">2015-09-07 03:00:00</div>
<div class="t" style="left:827.20px;top:394.44px;font-size:10px;line-height:13.0px;font-weight:normal;color:#343d47;letter-spacing:0px;transform:scaleX(0.8740);transform-origin:0 0;">2015-09-07 08:00:15</div>
<div class="t" style="left:942.70px;top:394.44px;font-size:10px;line-height:13.0px;font-weight:normal;color:#343d47;letter-spacing:0px;transform:scaleX(0.8950);transform-origin:0 0;text-decoration:underline;text-underline-offset:1.2px;text-decoration-color:#8d949b;">Bow Ruggeri</div>
<div class="r" style="left:214px;top:419.5px;width:810px;height:38px;background:#f0f0f0;"></div>
<div class="r" style="left:214px;top:419.5px;width:47px;height:38px;background:#ebedef;"></div>
<div class="r" style="left:214px;top:456.5px;width:810px;height:1px;background:#d9dadc;"></div>
<div class="r" style="left:225.6px;top:430.5px;width:13px;height:13px;background:#fff;border:1px solid #d3d6d9;border-radius:2.5px"></div>
<div class="t" style="left:308.20px;top:431.94px;font-size:10px;line-height:13.0px;font-weight:normal;color:#343d47;letter-spacing:0px;transform:scaleX(0.8520);transform-origin:0 0;text-decoration:underline;text-underline-offset:1.2px;text-decoration-color:#8d949b;">CHG0000010</div>
<div class="t" style="left:390.80px;top:425.09px;font-size:10px;line-height:13.0px;font-weight:normal;color:#343d47;letter-spacing:0px;transform:scaleX(0.9200);transform-origin:0 0;">Java Application Server</div>
<div class="t" style="left:390.80px;top:438.79px;font-size:10px;line-height:13.0px;font-weight:normal;color:#343d47;letter-spacing:0px;transform:scaleX(0.9200);transform-origin:0 0;">change</div>
<div class="t" style="left:518.20px;top:431.94px;font-size:10px;line-height:13.0px;font-weight:normal;color:#343d47;letter-spacing:0px;transform:scaleX(0.9060);transform-origin:0 0;">Approved</div>
<div class="t" style="left:584.93px;top:431.94px;font-size:10px;line-height:13.0px;font-weight:normal;color:#343d47;letter-spacing:0px;transform:scaleX(0.9740);transform-origin:0 0;">Normal</div>
<div class="t" style="left:645.74px;top:431.94px;font-size:10px;line-height:13.0px;font-weight:normal;color:#343d47;letter-spacing:0px;transform:scaleX(0.9630);transform-origin:0 0;">New</div>
<div class="t" style="left:707.90px;top:431.94px;font-size:10px;line-height:13.0px;font-weight:normal;color:#343d47;letter-spacing:0px;transform:scaleX(0.8740);transform-origin:0 0;">2015-10-02 03:00:00</div>
<div class="t" style="left:827.20px;top:431.94px;font-size:10px;line-height:13.0px;font-weight:normal;color:#343d47;letter-spacing:0px;transform:scaleX(0.8740);transform-origin:0 0;">2015-10-02 08:00:00</div>
<div class="t" style="left:942.70px;top:431.94px;font-size:10px;line-height:13.0px;font-weight:normal;color:#343d47;letter-spacing:0px;transform:scaleX(0.8950);transform-origin:0 0;text-decoration:underline;text-underline-offset:1.2px;text-decoration-color:#8d949b;">Don Goodliffe</div>
<div class="r" style="left:214px;top:457.5px;width:810px;height:38px;background:#fff;"></div>
<div class="r" style="left:214px;top:457.5px;width:47px;height:38px;background:#ebedef;"></div>
<div class="r" style="left:214px;top:494.5px;width:810px;height:1px;background:#d9dadc;"></div>
<div class="r" style="left:225.6px;top:468.5px;width:13px;height:13px;background:#fff;border:1px solid #d3d6d9;border-radius:2.5px"></div>
<div class="t" style="left:308.20px;top:469.94px;font-size:10px;line-height:13.0px;font-weight:normal;color:#343d47;letter-spacing:0px;transform:scaleX(0.8520);transform-origin:0 0;text-decoration:underline;text-underline-offset:1.2px;text-decoration-color:#8d949b;">CHG0000011</div>
<div class="t" style="left:390.80px;top:463.09px;font-size:10px;line-height:13.0px;font-weight:normal;color:#343d47;letter-spacing:0px;transform:scaleX(0.9200);transform-origin:0 0;">Another Java Application</div>
<div class="t" style="left:390.80px;top:476.79px;font-size:10px;line-height:13.0px;font-weight:normal;color:#343d47;letter-spacing:0px;transform:scaleX(0.9200);transform-origin:0 0;">Server change</div>
<div class="t" style="left:518.20px;top:469.94px;font-size:10px;line-height:13.0px;font-weight:normal;color:#343d47;letter-spacing:0px;transform:scaleX(0.9060);transform-origin:0 0;">Approved</div>
<div class="t" style="left:584.93px;top:469.94px;font-size:10px;line-height:13.0px;font-weight:normal;color:#343d47;letter-spacing:0px;transform:scaleX(0.9740);transform-origin:0 0;">Normal</div>
<div class="t" style="left:645.74px;top:469.94px;font-size:10px;line-height:13.0px;font-weight:normal;color:#343d47;letter-spacing:0px;transform:scaleX(0.9630);transform-origin:0 0;">New</div>
<div class="t" style="left:707.90px;top:469.94px;font-size:10px;line-height:13.0px;font-weight:normal;color:#343d47;letter-spacing:0px;transform:scaleX(0.8740);transform-origin:0 0;">2016-04-16 03:00:00</div>
<div class="t" style="left:827.20px;top:469.94px;font-size:10px;line-height:13.0px;font-weight:normal;color:#343d47;letter-spacing:0px;transform:scaleX(0.8740);transform-origin:0 0;">2016-04-17 06:00:00</div>
<div class="t" style="left:942.70px;top:469.94px;font-size:10px;line-height:13.0px;font-weight:normal;color:#343d47;letter-spacing:0px;transform:scaleX(0.8950);transform-origin:0 0;text-decoration:underline;text-underline-offset:1.2px;text-decoration-color:#8d949b;">David Loo</div>
<div class="r" style="left:214px;top:495.5px;width:810px;height:38px;background:#f0f0f0;"></div>
<div class="r" style="left:214px;top:495.5px;width:47px;height:38px;background:#ebedef;"></div>
<div class="r" style="left:214px;top:532.5px;width:810px;height:1px;background:#d9dadc;"></div>
<div class="r" style="left:225.6px;top:506.5px;width:13px;height:13px;background:#fff;border:1px solid #d3d6d9;border-radius:2.5px"></div>
<div class="t" style="left:308.20px;top:507.94px;font-size:10px;line-height:13.0px;font-weight:normal;color:#343d47;letter-spacing:0px;transform:scaleX(0.8520);transform-origin:0 0;text-decoration:underline;text-underline-offset:1.2px;text-decoration-color:#8d949b;">CHG0000012</div>
<div class="t" style="left:390.80px;top:507.94px;font-size:10px;line-height:13.0px;font-weight:normal;color:#343d47;letter-spacing:0px;transform:scaleX(0.9200);transform-origin:0 0;">Java App Server</div>
<div class="t" style="left:518.20px;top:507.94px;font-size:10px;line-height:13.0px;font-weight:normal;color:#343d47;letter-spacing:0px;transform:scaleX(0.9060);transform-origin:0 0;">Approved</div>
<div class="t" style="left:584.93px;top:507.94px;font-size:10px;line-height:13.0px;font-weight:normal;color:#343d47;letter-spacing:0px;transform:scaleX(0.9740);transform-origin:0 0;">Normal</div>
<div class="t" style="left:645.74px;top:507.94px;font-size:10px;line-height:13.0px;font-weight:normal;color:#343d47;letter-spacing:0px;transform:scaleX(0.9630);transform-origin:0 0;">New</div>
<div class="t" style="left:707.90px;top:507.94px;font-size:10px;line-height:13.0px;font-weight:normal;color:#343d47;letter-spacing:0px;transform:scaleX(0.8740);transform-origin:0 0;">2016-04-08 18:00:00</div>
<div class="t" style="left:827.20px;top:507.94px;font-size:10px;line-height:13.0px;font-weight:normal;color:#343d47;letter-spacing:0px;transform:scaleX(0.8740);transform-origin:0 0;">2016-04-08 20:00:00</div>
<div class="t" style="left:942.70px;top:501.09px;font-size:10px;line-height:13.0px;font-weight:normal;color:#343d47;letter-spacing:0px;transform:scaleX(0.8950);transform-origin:0 0;text-decoration:underline;text-underline-offset:1.2px;text-decoration-color:#8d949b;">Charlie</div>
<div class="t" style="left:942.70px;top:514.78px;font-size:10px;line-height:13.0px;font-weight:normal;color:#343d47;letter-spacing:0px;transform:scaleX(0.8950);transform-origin:0 0;text-decoration:underline;text-underline-offset:1.2px;text-decoration-color:#8d949b;">Whitherspoon</div>
<div class="r" style="left:214px;top:533.5px;width:810px;height:38px;background:#fff;"></div>
<div class="r" style="left:214px;top:533.5px;width:47px;height:38px;background:#ebedef;"></div>
<div class="r" style="left:214px;top:570.5px;width:810px;height:1px;background:#d9dadc;"></div>
<div class="r" style="left:225.6px;top:544.5px;width:13px;height:13px;background:#fff;border:1px solid #d3d6d9;border-radius:2.5px"></div>
<div class="t" style="left:308.20px;top:545.93px;font-size:10px;line-height:13.0px;font-weight:normal;color:#343d47;letter-spacing:0px;transform:scaleX(0.8520);transform-origin:0 0;text-decoration:underline;text-underline-offset:1.2px;text-decoration-color:#8d949b;">CHG0000013</div>
<div class="t" style="left:390.80px;top:539.08px;font-size:10px;line-height:13.0px;font-weight:normal;color:#343d47;letter-spacing:0px;transform:scaleX(0.9200);transform-origin:0 0;">Oracle FLX (Java App</div>
<div class="t" style="left:389.88px;top:552.78px;font-size:10px;line-height:13.0px;font-weight:normal;color:#343d47;letter-spacing:0px;transform:scaleX(0.9200);transform-origin:0 0;">Dependency)</div>
<div class="t" style="left:518.20px;top:545.93px;font-size:10px;line-height:13.0px;font-weight:normal;color:#343d47;letter-spacing:0px;transform:scaleX(0.9060);transform-origin:0 0;">Approved</div>
<div class="t" style="left:584.93px;top:545.93px;font-size:10px;line-height:13.0px;font-weight:normal;color:#343d47;letter-spacing:0px;transform:scaleX(0.9740);transform-origin:0 0;">Normal</div>
<div class="t" style="left:645.74px;top:545.93px;font-size:10px;line-height:13.0px;font-weight:normal;color:#343d47;letter-spacing:0px;transform:scaleX(0.9630);transform-origin:0 0;">New</div>
<div class="t" style="left:707.90px;top:545.93px;font-size:10px;line-height:13.0px;font-weight:normal;color:#343d47;letter-spacing:0px;transform:scaleX(0.8740);transform-origin:0 0;">2016-04-17 12:00:00</div>
<div class="t" style="left:827.20px;top:545.93px;font-size:10px;line-height:13.0px;font-weight:normal;color:#343d47;letter-spacing:0px;transform:scaleX(0.8740);transform-origin:0 0;">2016-04-17 14:00:00</div>
<div class="t" style="left:942.70px;top:545.93px;font-size:10px;line-height:13.0px;font-weight:normal;color:#343d47;letter-spacing:0px;transform:scaleX(0.8950);transform-origin:0 0;text-decoration:underline;text-underline-offset:1.2px;text-decoration-color:#8d949b;">Fred Luddy</div>
<div class="r" style="left:214px;top:571.5px;width:810px;height:39px;background:#f0f0f0;"></div>
<div class="r" style="left:214px;top:571.5px;width:47px;height:39px;background:#ebedef;"></div>
<div class="r" style="left:214px;top:609.5px;width:810px;height:1px;background:#d9dadc;"></div>
<div class="r" style="left:225.6px;top:583.0px;width:13px;height:13px;background:#fff;border:1px solid #d3d6d9;border-radius:2.5px"></div>
<div class="t" style="left:308.20px;top:584.43px;font-size:10px;line-height:13.0px;font-weight:normal;color:#343d47;letter-spacing:0px;transform:scaleX(0.8520);transform-origin:0 0;text-decoration:underline;text-underline-offset:1.2px;text-decoration-color:#8d949b;">CHG0000014</div>
<div class="t" style="left:390.80px;top:577.58px;font-size:10px;line-height:13.0px;font-weight:normal;color:#343d47;letter-spacing:0px;transform:scaleX(0.9200);transform-origin:0 0;">CMS App FLX (depends on</div>
<div class="t" style="left:390.80px;top:591.28px;font-size:10px;line-height:13.0px;font-weight:normal;color:#343d47;letter-spacing:0px;transform:scaleX(0.9200);transform-origin:0 0;">Java Apps FLX)</div>
<div class="t" style="left:518.20px;top:584.43px;font-size:10px;line-height:13.0px;font-weight:normal;color:#343d47;letter-spacing:0px;transform:scaleX(0.9060);transform-origin:0 0;">Approved</div>
<div class="t" style="left:584.93px;top:584.43px;font-size:10px;line-height:13.0px;font-weight:normal;color:#343d47;letter-spacing:0px;transform:scaleX(0.9740);transform-origin:0 0;">Normal</div>
<div class="t" style="left:645.74px;top:584.43px;font-size:10px;line-height:13.0px;font-weight:normal;color:#343d47;letter-spacing:0px;transform:scaleX(0.9630);transform-origin:0 0;">New</div>
<div class="t" style="left:707.90px;top:584.43px;font-size:10px;line-height:13.0px;font-weight:normal;color:#343d47;letter-spacing:0px;transform:scaleX(0.8740);transform-origin:0 0;">2016-04-19 01:00:00</div>
<div class="t" style="left:827.20px;top:584.43px;font-size:10px;line-height:13.0px;font-weight:normal;color:#343d47;letter-spacing:0px;transform:scaleX(0.8740);transform-origin:0 0;">2016-04-19 02:59:59</div>
<div class="t" style="left:942.70px;top:584.43px;font-size:10px;line-height:13.0px;font-weight:normal;color:#343d47;letter-spacing:0px;transform:scaleX(0.8950);transform-origin:0 0;text-decoration:underline;text-underline-offset:1.2px;text-decoration-color:#8d949b;">Christen Mitchell</div>
<svg class="r" style="left:0;top:0" width="1024" height="605"><circle cx="276.9" cy="172.3" r="6.4" fill="none" stroke="#4a9df6" stroke-width="1.25"/><rect x="276.15" y="171.0" width="1.6" height="5.2" fill="#4a9df6"/><rect x="276.15" y="168.1" width="1.6" height="1.8" fill="#4a9df6"/><circle cx="510.4" cy="172.5" r="3.2" fill="#efe08a"/><circle cx="276.9" cy="207.3" r="6.4" fill="none" stroke="#4a9df6" stroke-width="1.25"/><rect x="276.15" y="206.0" width="1.6" height="5.2" fill="#4a9df6"/><rect x="276.15" y="203.1" width="1.6" height="1.8" fill="#4a9df6"/><circle cx="276.9" cy="242.8" r="6.4" fill="none" stroke="#4a9df6" stroke-width="1.25"/><rect x="276.15" y="241.5" width="1.6" height="5.2" fill="#4a9df6"/><rect x="276.15" y="238.6" width="1.6" height="1.8" fill="#4a9df6"/><circle cx="510.4" cy="243.0" r="3.2" fill="#86dd86"/><circle cx="276.9" cy="278.6" r="6.4" fill="none" stroke="#4a9df6" stroke-width="1.25"/><rect x="276.15" y="277.3" width="1.6" height="5.2" fill="#4a9df6"/><rect x="276.15" y="274.4" width="1.6" height="1.8" fill="#4a9df6"/><circle cx="276.9" cy="323.1" r="6.4" fill="none" stroke="#4a9df6" stroke-width="1.25"/><rect x="276.15" y="321.8" width="1.6" height="5.2" fill="#4a9df6"/><rect x="276.15" y="318.9" width="1.6" height="1.8" fill="#4a9df6"/><circle cx="510.4" cy="323.3" r="3.2" fill="#fa6a4c"/><circle cx="276.9" cy="365.8" r="6.4" fill="none" stroke="#4a9df6" stroke-width="1.25"/><rect x="276.15" y="364.5" width="1.6" height="5.2" fill="#4a9df6"/><rect x="276.15" y="361.6" width="1.6" height="1.8" fill="#4a9df6"/><circle cx="510.4" cy="366.0" r="3.2" fill="#efe08a"/><circle cx="276.9" cy="401.3" r="6.4" fill="none" stroke="#4a9df6" stroke-width="1.25"/><rect x="276.15" y="400.0" width="1.6" height="5.2" fill="#4a9df6"/><rect x="276.15" y="397.1" width="1.6" height="1.8" fill="#4a9df6"/><circle cx="510.4" cy="401.5" r="3.2" fill="#86dd86"/><circle cx="276.9" cy="438.8" r="6.4" fill="none" stroke="#4a9df6" stroke-width="1.25"/><rect x="276.15" y="437.5" width="1.6" height="5.2" fill="#4a9df6"/><rect x="276.15" y="434.6" width="1.6" height="1.8" fill="#4a9df6"/><circle cx="510.4" cy="439.0" r="3.2" fill="#86dd86"/><circle cx="276.9" cy="476.8" r="6.4" fill="none" stroke="#4a9df6" stroke-width="1.25"/><rect x="276.15" y="475.5" width="1.6" height="5.2" fill="#4a9df6"/><rect x="276.15" y="472.6" width="1.6" height="1.8" fill="#4a9df6"/><circle cx="510.4" cy="477.0" r="3.2" fill="#86dd86"/><circle cx="276.9" cy="514.8" r="6.4" fill="none" stroke="#4a9df6" stroke-width="1.25"/><rect x="276.15" y="513.5" width="1.6" height="5.2" fill="#4a9df6"/><rect x="276.15" y="510.6" width="1.6" height="1.8" fill="#4a9df6"/><circle cx="510.4" cy="515.0" r="3.2" fill="#86dd86"/><circle cx="276.9" cy="552.8" r="6.4" fill="none" stroke="#4a9df6" stroke-width="1.25"/><rect x="276.15" y="551.5" width="1.6" height="5.2" fill="#4a9df6"/><rect x="276.15" y="548.6" width="1.6" height="1.8" fill="#4a9df6"/><circle cx="510.4" cy="553.0" r="3.2" fill="#86dd86"/><circle cx="276.9" cy="591.3" r="6.4" fill="none" stroke="#4a9df6" stroke-width="1.25"/><rect x="276.15" y="590.0" width="1.6" height="5.2" fill="#4a9df6"/><rect x="276.15" y="587.1" width="1.6" height="1.8" fill="#4a9df6"/><circle cx="510.4" cy="591.5" r="3.2" fill="#86dd86"/></svg>
<div class="r" style="left:0px;top:604px;width:1024px;height:1px;background:#111;"></div>
</body></html>
